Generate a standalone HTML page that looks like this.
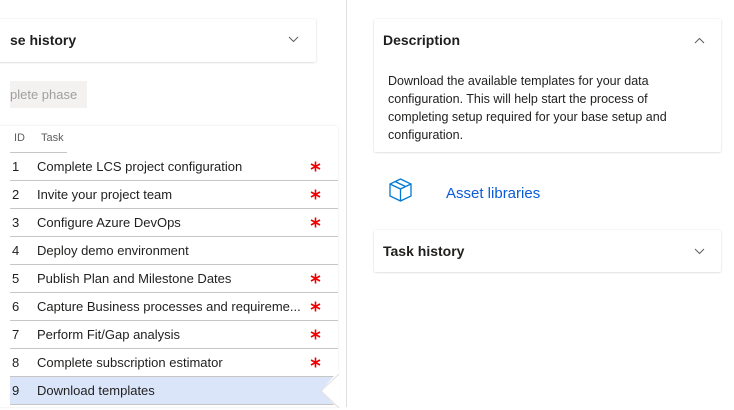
<html><head><style>
body{margin:0;width:734px;height:407px;background:#fff;font-family:"Liberation Sans",sans-serif;color:#201f1e;position:relative;overflow:hidden}
.card{position:absolute;background:#fff;box-shadow:0 0.5px 2px rgba(0,0,0,.18);border-radius:2px}
.t{position:absolute;font-size:13px;white-space:nowrap}
.row{position:absolute;left:10px;width:328px;height:27px;border-bottom:1px solid #c8c6c4;font-size:13px}
.row span{position:absolute;top:6px}
.row svg{position:absolute;left:300px;top:8px}
</style></head><body>
<svg width="0" height="0" style="position:absolute"><defs><symbol id="a" viewBox="0 0 11 11"><path d="M5.5 0.5v10M1 3l9 5M1 8l9-5" stroke="#e00" stroke-width="1.6"/></symbol></defs></svg>
<div style="position:absolute;left:346px;top:0;width:1px;height:407px;background:#e1dfdd"></div>
<div class="card" style="left:-4px;top:19px;width:320px;height:43px"></div>
<div class="t" style="left:10px;top:32px;font-weight:bold;font-size:14px">se history</div>
<svg style="position:absolute;left:288px;top:36px" width="11" height="7"><path d="M1 1l4.5 4.5L10 1" fill="none" stroke="#605e5c"/></svg>
<div style="position:absolute;left:10px;top:81px;width:77px;height:27px;background:#f3f2f1"></div>
<div class="t" style="left:10px;top:87px;color:#a19f9d">plete phase</div>
<div class="card" style="left:-4px;top:126px;width:342px;height:281px;box-shadow:0 0 2px rgba(0,0,0,.12)"></div>
<div class="t" style="left:14px;top:132px;font-size:11px;color:#605e5c">ID</div>
<div class="t" style="left:41px;top:132px;font-size:11px;color:#605e5c">Task</div>
<div style="position:absolute;left:10px;top:152px;width:57px;height:1px;background:#c8c6c4"></div>
<div class="row" style="top:153px"><span style="left:2px">1</span><span style="left:27px">Complete LCS project configuration</span><svg width="11" height="11"><use href="#a"/></svg></div>
<div class="row" style="top:181px"><span style="left:2px">2</span><span style="left:27px">Invite your project team</span><svg width="11" height="11"><use href="#a"/></svg></div>
<div class="row" style="top:209px"><span style="left:2px">3</span><span style="left:27px">Configure Azure DevOps</span><svg width="11" height="11"><use href="#a"/></svg></div>
<div class="row" style="top:237px"><span style="left:2px">4</span><span style="left:27px">Deploy demo environment</span></div>
<div class="row" style="top:265px"><span style="left:2px">5</span><span style="left:27px">Publish Plan and Milestone Dates</span><svg width="11" height="11"><use href="#a"/></svg></div>
<div class="row" style="top:293px"><span style="left:2px">6</span><span style="left:27px">Capture Business processes and requireme...</span><svg width="11" height="11"><use href="#a"/></svg></div>
<div class="row" style="top:321px"><span style="left:2px">7</span><span style="left:27px">Perform Fit/Gap analysis</span><svg width="11" height="11"><use href="#a"/></svg></div>
<div class="row" style="top:349px"><span style="left:2px">8</span><span style="left:27px">Complete subscription estimator</span><svg width="11" height="11"><use href="#a"/></svg></div>
<div class="row" style="top:377px;background:#dae5f9"><span style="left:2px">9</span><span style="left:27px">Download templates</span></div>
<svg style="position:absolute;left:318px;top:370px" width="22" height="40"><path d="M21 0L3 21L21 40Z" fill="#fff"/><path d="M21 4L3 21L21 38" fill="none" stroke="#e1dfdd"/></svg>
<div class="card" style="left:374px;top:19px;width:347px;height:133px"></div>
<div class="t" style="left:383px;top:32px;font-weight:bold;font-size:14px">Description</div>
<svg style="position:absolute;left:694px;top:37px" width="11" height="7"><path d="M1 6l4.5-4.5L10 6" fill="none" stroke="#605e5c"/></svg>
<div class="t" style="left:388px;top:72px;line-height:18px;font-size:12.5px">Download the available templates for your data<br>configuration. This will help start the process of<br>completing setup required for your base setup and<br>configuration.</div>
<svg style="position:absolute;left:389px;top:178px" width="24" height="25"><path d="M11.5 1L22 6v12l-10.5 5L1 18V6z M1 6l10.5 5L22 6 M11.5 11v12 M6 3.5l10.5 5" fill="none" stroke="#0078d4" stroke-width="1.3"/></svg>
<div class="t" style="left:446px;top:185px;color:#0a5bd8;font-size:15px">Asset libraries</div>
<div class="card" style="left:374px;top:230px;width:347px;height:42px"></div>
<div class="t" style="left:383px;top:243px;font-weight:bold;font-size:14px">Task history</div>
<svg style="position:absolute;left:694px;top:248px" width="11" height="7"><path d="M1 1l4.5 4.5L10 1" fill="none" stroke="#605e5c"/></svg>
</body></html>
